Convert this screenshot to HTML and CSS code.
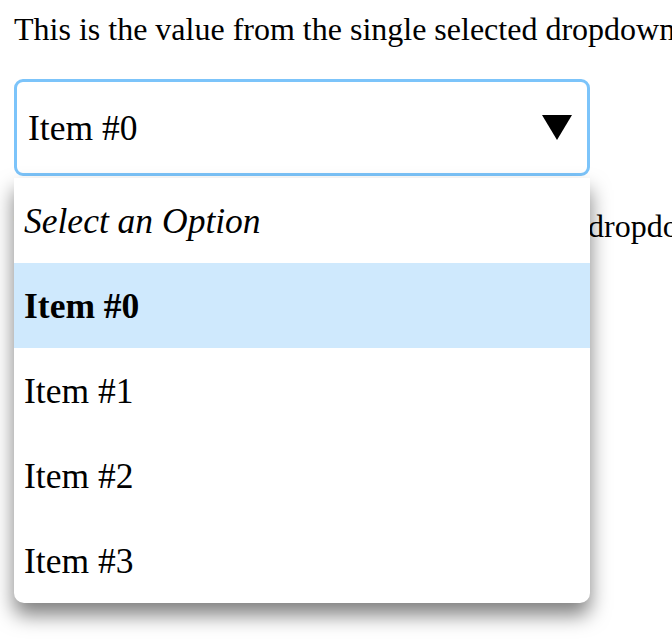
FILE: index.html
```html
<!DOCTYPE html>
<html>
<head>
<meta charset="utf-8">
<link rel="stylesheet" href="styles.css">
</head>
<body>
<div class="page">
  <p class="label">This is the value from the single selected dropdown</p>
  <div class="select">
    <div class="trigger">
      <span class="value">Item #0</span>
      <svg class="arrow" width="32" height="28" viewBox="0 0 32 28" aria-hidden="true"><polygon points="1,2 31,2 16,27" fill="#000"/></svg>
    </div>
    <ul class="menu">
      <li class="option placeholder">Select an Option</li>
      <li class="option selected">Item #0</li>
      <li class="option">Item #1</li>
      <li class="option">Item #2</li>
      <li class="option">Item #3</li>
    </ul>
  </div>
  <p class="label second">This is the values from the multiple selected dropdown</p>
</div>
</body>
</html>
```
FILE: styles.css
```css
html, body {
  margin: 0;
  padding: 0;
  background: #fff;
  overflow: hidden;
}
body {
  font-family: "Liberation Serif", "Times New Roman", serif;
  color: #000;
}
.page {
  padding: 0 14px;
  width: 672px;
  height: 642px;
  box-sizing: border-box;
  overflow: hidden;
}
.label {
  font-size: 32px;
  margin: 11px 0 0;
  white-space: nowrap;
  line-height: 37px;
}
.label.second {
  margin-top: 32px;
}
.select {
  position: relative;
  width: 576px;
  margin-top: 31px;
}
.trigger {
  box-sizing: border-box;
  height: 97px;
  border: 3px solid #7cc4fa;
  border-radius: 9px;
  display: flex;
  align-items: center;
  justify-content: space-between;
  padding: 0 14px 0 11px;
  font-size: 35.5px;
}
.arrow {
  display: block;
  margin-top: -2px;
}
.menu {
  position: absolute;
  left: 0;
  right: 0;
  top: 99px;
  margin: 0;
  padding: 0;
  list-style: none;
  background: #fff;
  border-radius: 0 0 10px 10px;
  box-shadow: 0 12px 20px rgba(0, 0, 0, 0.5);
  overflow: hidden;
  z-index: 2;
}
.option {
  height: 85px;
  display: flex;
  align-items: center;
  padding: 0 10px;
  font-size: 35.5px;
}
.placeholder {
  font-style: italic;
}
.selected {
  background: #cfe9fd;
  font-weight: bold;
}
```
